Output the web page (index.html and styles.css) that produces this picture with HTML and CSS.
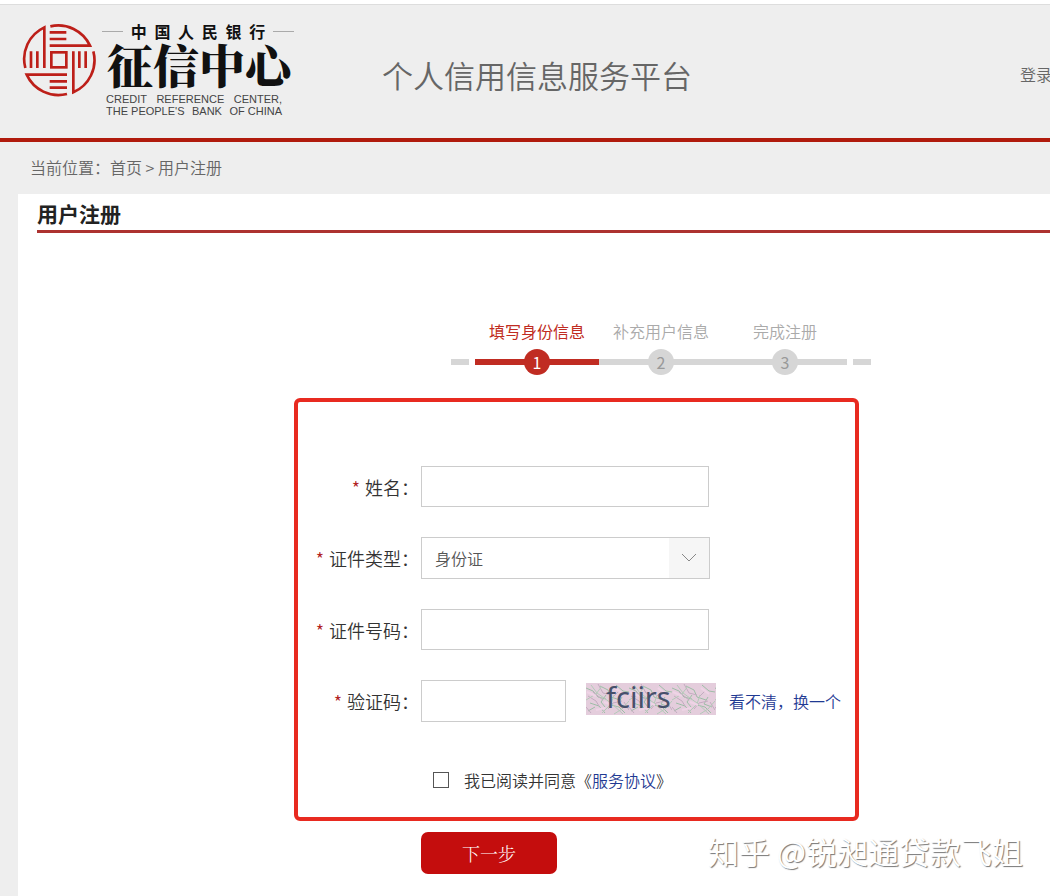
FILE: index.html
```html
<!DOCTYPE html>
<html lang="zh-CN">
<head>
<meta charset="utf-8">
<title>用户注册</title>
<link rel="stylesheet" href="styles.css">
</head>
<body>
<header class="header">
  <div class="logo">
    <svg class="seal" viewBox="21 27 222 222" fill="none" stroke="#bd1f19" stroke-width="8" aria-hidden="true">
      <path d="M31 162A105 105 0 0 1 88 40V162M48 112V162M67 112V162"/>
      <path d="M106 37A105 105 0 0 1 225 95H104M104 55H154M104 75H154"/>
      <path d="M235 112A105 105 0 0 1 175 235V112M193 112V162M212 112V162"/>
      <path d="M156 240A105 105 0 0 1 35 182H156M104 202H156M104 221H156"/>
      <rect x="109" y="115" width="45" height="45"/>
    </svg>
    <div class="wordmark">
      <div class="bank"><i class="dash"></i><span>中</span><span>国</span><span>人</span><span>民</span><span>银</span><span>行</span><i class="dash"></i></div>
      <div class="center-name">征信中心</div>
      <div class="english"><span>CREDIT</span><span>REFERENCE</span><span>CENTER,</span></div>
      <div class="english"><span>THE PEOPLE'S</span><span>BANK</span><span>OF CHINA</span></div>
    </div>
  </div>
  <h1 class="platform">个人信用信息服务平台</h1>
  <nav class="account"><a href="#login">登录</a></nav>
</header>
<nav class="crumbs">当前位置：<a href="#home">首页</a> &gt; 用户注册</nav>
<main class="panel">
  <h2 class="title">用户注册</h2>
  <div class="progress">
    <i class="tick"></i>
    <ol class="steps">
      <li class="step active"><span>填写身份信息</span><b class="num">1</b></li>
      <li class="step"><span>补充用户信息</span><b class="num">2</b></li>
      <li class="step"><span>完成注册</span><b class="num">3</b></li>
    </ol>
    <i class="tick"></i>
  </div>
  <form class="form">
    <div class="fields">
      <div class="row">
        <label class="label" for="name"><span class="star">*</span>姓名：</label>
        <input class="input" id="name" type="text">
      </div>
      <div class="row">
        <label class="label" for="idtype"><span class="star">*</span>证件类型：</label>
        <div class="select-wrap">
          <select class="select" id="idtype"><option>身份证</option></select>
          <span class="arrow"><svg width="16" height="10" viewBox="0 0 16 10" fill="none" stroke="#888" aria-hidden="true"><path d="M1 1l7 7 7-7"/></svg></span>
        </div>
      </div>
      <div class="row">
        <label class="label" for="idno"><span class="star">*</span>证件号码：</label>
        <input class="input" id="idno" type="text">
      </div>
      <div class="row">
        <label class="label" for="code"><span class="star">*</span>验证码：</label>
        <input class="input short" id="code" type="text">
        <svg class="captcha" width="130" height="32" viewBox="0 0 130 32" role="img" aria-label="验证码">
          <defs>
            <pattern id="noise" width="43" height="32" patternUnits="userSpaceOnUse">
              <g fill="none" stroke-width="1">
                <path stroke="#9dbda6" d="M0 5l7 3 5 6 8 2M4 20l9 3 6 7M14 3l8 4 3 7 9 3M25 22l8 2 6 6M30 2l7 6 6 1M2 28l7-4M20 12l-5 7 4 5M36 14l-4 7 8 3"/>
                <path stroke="#c3abc0" d="M2 13l8 5 3 5M12 1l5 9 8 2M22 26l5-6 9-2M33 8l-6 6M0 24l5 6M38 19l5 8M7 9l10 8"/>
                <path stroke="#b3c9b8" d="M0 17l10-6 6-8M16 30l9-9 3-9M28 31l8-5 7-8M5 2l6 8 14 10 12 11"/>
                <path stroke="#efd3e6" stroke-width="2" d="M1 9l9 4M18 19l8 3M29 5l8 6M10 27l9-2"/>
              </g>
            </pattern>
          </defs>
          <rect width="130" height="32" fill="#e4cddc"/>
          <rect width="130" height="32" fill="url(#noise)"/>
          <text class="captcha-text" x="20" y="25">fciirs</text>
        </svg>
        <a class="link refresh" href="#refresh">看不清，换一个</a>
      </div>
      <div class="agree">
        <input class="check" id="agree" type="checkbox">
        <label for="agree">我已阅读并同意《<a class="link" href="#terms">服务协议</a>》</label>
      </div>
    </div>
    <button class="next" type="button">下一步</button>
  </form>
</main>
<div class="watermark">知乎 @锐昶通贷款飞姐</div>
</body>
</html>
```
FILE: styles.css
```css
* { box-sizing: border-box; }
body {
  margin: 0;
  padding-top: 4px;
  background: #fff;
  color: #333;
  font-family: "Noto Sans CJK SC", sans-serif;
  font-weight: 350;
  font-size: 16px;
  line-height: 24px;
  overflow-x: hidden;
}
a { color: inherit; text-decoration: none; }
.header {
  display: flex;
  align-items: center;
  height: 138px;
  padding-left: 22px;
  background: #eee;
  border-top: 1px solid #ddd;
  border-bottom: 4px solid #b01a0c;
}
.logo { display: flex; gap: 6px; padding-bottom: 4px; }
.seal { width: 74px; height: 74px; margin-top: 1px; }
.wordmark { width: 192px; color: #111; }
.bank {
  display: flex;
  align-items: center;
  justify-content: space-between;
  font-size: 16px;
  font-weight: 700;
  line-height: 18px;
}
.dash { width: 21px; height: 1px; background: #aaa; }
.center-name {
  padding-left: 5px;
  font-family: "Noto Serif CJK SC", "Noto Sans CJK SC", serif;
  font-size: 46px;
  font-weight: 900;
  line-height: 46px;
  margin-bottom: 7px;
}
.english {
  display: flex;
  justify-content: space-between;
  margin: 0 12px 0 4px;
  color: #444;
  font-family: "Liberation Sans", sans-serif;
  font-size: 11px;
  font-weight: 400;
  line-height: 12px;
}
.platform {
  margin: 0 0 0 88px;
  padding-top: 7px;
  color: #666;
  font-size: 31px;
  font-weight: 350;
  line-height: 40px;
  white-space: nowrap;
}
.account {
  width: 30px;
  margin-left: auto;
  padding-top: 5px;
  color: #666;
  white-space: nowrap;
}
.crumbs {
  padding: 13px 30px 15px;
  background: #eee;
  color: #666;
}
.panel {
  min-height: 702px;
  padding-left: 19px;
  border-left: 18px solid #eee;
}
.title {
  margin: 0;
  padding: 7px 0 5px;
  border-bottom: 3px solid #ad3230;
  color: #222;
  font-size: 21px;
  font-weight: 700;
  line-height: 24px;
}
.progress {
  display: flex;
  align-items: flex-end;
  gap: 6px;
  padding: 86px 0 0 414px;
}
.tick { width: 18px; height: 6px; margin-bottom: 10px; background: #d6d6d6; }
.steps { display: flex; margin: 0; padding: 0; list-style: none; }
.step {
  display: flex;
  flex-direction: column;
  align-items: center;
  gap: 6px;
  width: 124px;
  background: linear-gradient(#d6d6d6, #d6d6d6) left 0 bottom 10px / 100% 6px no-repeat;
  color: #aaa;
}
.num {
  width: 26px;
  height: 26px;
  border-radius: 50%;
  background: #d6d6d6;
  color: #999;
  font-weight: 400;
  line-height: 26px;
  text-align: center;
}
.active { color: #c02c22; font-weight: 400; background-image: linear-gradient(#c02c22, #c02c22); }
.active .num { background: #c02c22; color: #fff; }
.form { margin: 23px 0 0 257px; }
.fields {
  display: flex;
  flex-direction: column;
  gap: 30px;
  width: 565px;
  padding: 64px 0 25px;
  border: 4px solid #e82a20;
  border-radius: 6px;
}
.row { display: flex; align-items: center; }
.label {
  width: 123px;
  padding-right: 2px;
  font-size: 18px;
  display: flex;
  justify-content: flex-end;
  white-space: nowrap;
}
.star { margin-right: 5px; color: #b02020; }
.input {
  width: 288px;
  height: 41px;
  padding: 0 12px;
  border: 1px solid #ccc;
  background: #fff;
  font: inherit;
}
.short { width: 145px; height: 42px; }
.select-wrap { position: relative; width: 289px; }
.select {
  display: block;
  width: 100%;
  height: 42px;
  padding: 0 13px;
  appearance: none;
  border: 1px solid #ccc;
  border-radius: 0;
  background: #fff;
  color: #555;
  font: inherit;
}
.arrow {
  position: absolute;
  top: 1px;
  right: 1px;
  bottom: 1px;
  display: flex;
  align-items: center;
  justify-content: center;
  width: 40px;
  background: #f6f6f6;
  pointer-events: none;
}
.captcha { margin: 0 13px 4px 20px; overflow: visible; }
.captcha-text { fill: #47506b; font-family: "Noto Sans", sans-serif; font-size: 29px; font-weight: 400; }
.link { color: #1f3a93; }
.refresh { white-space: nowrap; }
.agree { display: flex; align-items: center; gap: 15px; padding: 16px 0 0 135px; }
.check {
  width: 16px;
  height: 16px;
  margin: 0;
  appearance: none;
  border: 1px solid #555;
  background: #fff;
}
.check:checked { background: #c40d0d; }
.next {
  display: block;
  width: 136px;
  height: 42px;
  margin: 11px 0 0 127px;
  border: 0;
  border-radius: 7px;
  background: #c40d0d;
  color: #fff;
  font-family: "Noto Serif CJK SC", "Noto Sans CJK SC", serif;
  font-size: 18px;
  font-weight: 300;
}
.watermark {
  position: absolute;
  right: 27px;
  top: 831px;
  color: #fff;
  font-size: 31px;
  font-weight: 350;
  line-height: 40px;
  text-shadow: 1px 1px 1px #777;
  white-space: nowrap;
}
```
